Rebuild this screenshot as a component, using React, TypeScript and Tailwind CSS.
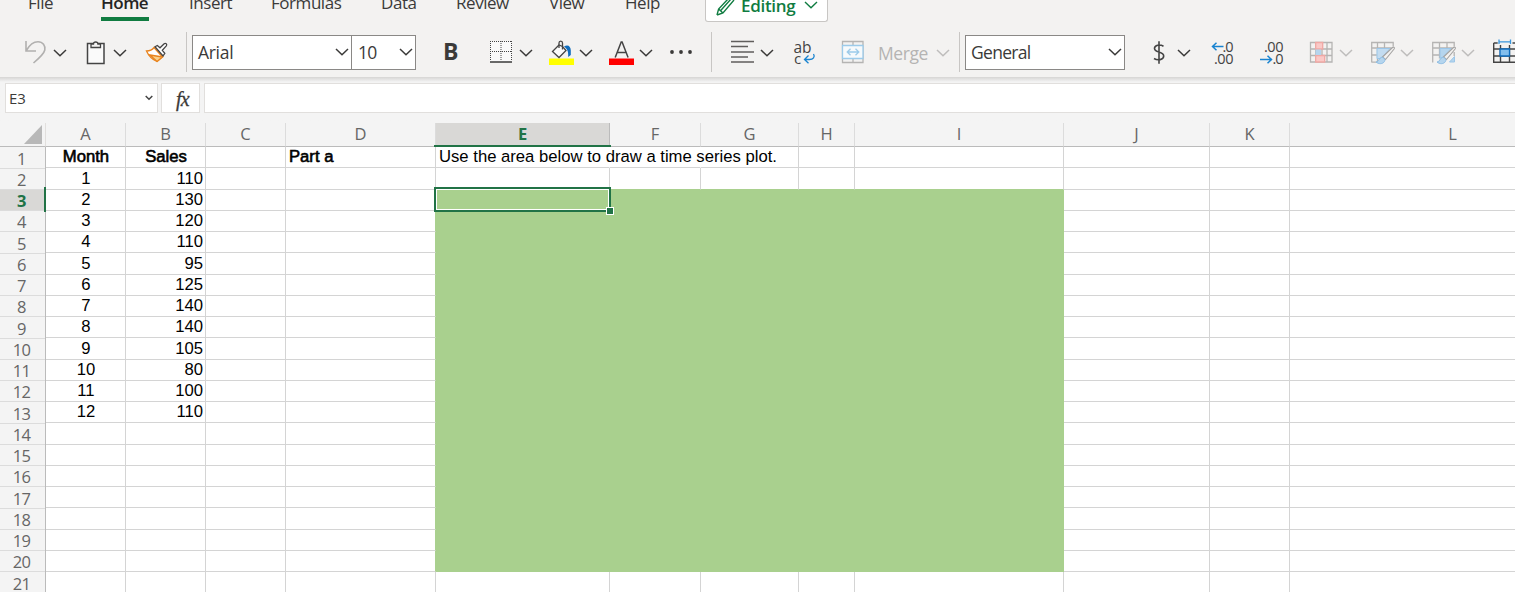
import React from 'react';
import clsx from 'clsx';

const COLUMNS = [
  { name: 'A', width: 'w-[80px]' },
  { name: 'B', width: 'w-[80px]' },
  { name: 'C', width: 'w-[80px]' },
  { name: 'D', width: 'w-[150px]' },
  { name: 'E', width: 'w-[174px]' },
  { name: 'F', width: 'w-[91px]' },
  { name: 'G', width: 'w-[98px]' },
  { name: 'H', width: 'w-[56px]' },
  { name: 'I', width: 'w-[209px]' },
  { name: 'J', width: 'w-[146px]' },
  { name: 'K', width: 'w-[80px]' },
  { name: 'L', width: 'w-[326px]' },
];

const SALES = [110, 130, 120, 110, 95, 125, 140, 140, 105, 80, 100, 110];
const ROWS = Array.from({ length: 21 }, (_, i) => i + 1);

const TABS = [
  { label: 'File', width: 'w-[73px]' },
  { label: 'Home', width: 'w-[88px]' },
  { label: 'Insert', width: 'w-[82px]' },
  { label: 'Formulas', width: 'w-[110px]' },
  { label: 'Data', width: 'w-[75px]' },
  { label: 'Review', width: 'w-[93px]' },
  { label: 'View', width: 'w-[76px]' },
  { label: 'Help', width: 'w-[80px]' },
];

interface IconProps {
  x: number;
  width: number;
  className?: string;
  children: React.ReactNode;
}

// Icons share one toolbar-wide coordinate space, each shows its own slice of it
function Icon({ x, width, className, children }: IconProps) {
  return (
    <svg
      width={width}
      height={28}
      viewBox={`${x} 38 ${width} 28`}
      fill="none"
      stroke="#444"
      strokeWidth="1.3"
      className={clsx('shrink-0', className)}
    >
      {children}
    </svg>
  );
}

function Chevron({ className, muted }: { className?: string; muted?: boolean }) {
  return (
    <svg
      width={14}
      height={8}
      viewBox="0 0 14 8"
      fill="none"
      stroke={muted ? '#bebdbc' : '#3b3a39'}
      strokeWidth="1.5"
      className={clsx('shrink-0', className)}
    >
      <path d="M1 1l6 5.8L13 1" />
    </svg>
  );
}

function Separator({ className }: { className: string }) {
  return <div className={clsx('h-10 w-px shrink-0 bg-[#c8c6c4]', className)} />;
}

function Ribbon() {
  return (
    <div className="h-[77px] bg-[#f3f2f1] text-[#3b3a39]">
      <div className="flex h-[27px] pl-7">
        {TABS.map((tab) => (
          <div key={tab.label} className={clsx('h-[21px] shrink-0', tab.width)}>
            <div
              className={clsx(
                'flex h-[21px] text-[17px] leading-[24px]',
                tab.label === 'Home'
                  ? 'w-[48px] border-b-4 border-[#107c41] font-semibold tracking-[-0.5px] text-[#252423]'
                  : 'w-fit tracking-[-0.45px]',
              )}
            >
              <div className="-mt-[9px] whitespace-nowrap">{tab.label}</div>
            </div>
          </div>
        ))}
        <div className="flex h-[22px] w-[123px] shrink-0 rounded-b-[3px] border border-t-0 border-[#c8c6c4] bg-white pl-[10px]">
          <svg width="20" height="18" viewBox="0 0 20 18" fill="none" stroke="#107c41" strokeWidth="1.4">
            <path d="M1 15l1.6-6L12-1M1 15l6-2L18 0M2.6 9l4.4 4M4.5 10.8L15-1" />
          </svg>
          <span className="-mt-[6px] ml-[5px] w-[63px] whitespace-nowrap text-[17px] font-semibold leading-[24px] tracking-[-0.3px] text-[#107c41]">
            Editing
          </span>
          <svg width="14" height="8" viewBox="0 0 14 8" fill="none" stroke="#107c41" strokeWidth="1.4" className="mt-[1px]">
            <path d="M1 1l6 5.8L13 1" />
          </svg>
        </div>
      </div>

      <div className="flex h-[50px] items-center overflow-hidden pl-6">
        <Icon x={24} width={26}>
          <path d="M26 41v10h10M26.3 50.5C30 44 34 41.700 38 41.700C43 41.700 45.500 46 44.800 50C44 54 40 57.500 33.500 63" stroke="#b1b0af" strokeWidth="1.6" />
        </Icon>
        <Chevron className="ml-[3px] mt-[2px]" />
        <Icon x={84} width={26} className="ml-[17px]">
          <rect x="87.500" y="43.500" width="16.500" height="20" fill="#fafafa" strokeWidth="1.5" />
          <path d="M91 47.500v-3.500h2.500c0-1.500 1-2 2.200-2s2.200.5 2.200 2h2.600v3.500z" fill="#f3f2f1" />
        </Icon>
        <Chevron className="ml-[3px] mt-[2px]" />
        <Icon x={145} width={26} className="ml-[18px]">
          <path d="M154 47.500L162.500 57L157 61.500C152 59.500 148.500 55.500 146.500 51C150 51 152.500 49.500 154 47.500z" fill="#fff" stroke="#e8831d" />
          <path d="M150 55L162.500 57L157 61.500z" fill="#fbd189" stroke="#e8831d" />
          <path d="M155 46.800l2.300-1.300 2.700 2.300 4.200-4c1.400-1.200 3.300.6 2.100 2.100L162.300 50.300l2.500 3-1.800 2.700z" fill="#fff" />
        </Icon>
        <Separator className="ml-[15px]" />

        <div className="ml-[5px] mt-px flex h-[35px] w-[224px] shrink-0 border border-[#8a8886] bg-white text-[17.5px] tracking-[-0.3px]">
          <div className="flex w-[159px] items-center justify-between border-r border-[#8a8886] pl-[5px] pr-[2px]">
            <span>Arial</span>
            <Chevron className="-mt-px" />
          </div>
          <div className="flex flex-1 items-center justify-between pl-[6px] pr-[2px]">
            <span className="tracking-[-0.8px]">10</span>
            <Chevron className="-mt-px" />
          </div>
        </div>

        <span className="-mt-[2px] ml-[27px] w-[17px] shrink-0 text-[23px] font-bold leading-none">B</span>
        <Icon x={489} width={25} className="ml-[29px]">
          <path d="M490 41h22v21h-22z" fill="#fafafa" stroke="none" />
          <path d="M490 41.500h22M490 51.500h22" strokeDasharray="1 1" strokeWidth="1" />
          <path d="M490.500 41v20M501 41v20M511.500 41v20" strokeDasharray="1 1" strokeWidth="1" />
          <path d="M490 62h22" strokeWidth="1.600" />
        </Icon>
        <Chevron className="ml-[5px] mt-[2px]" />
        <Icon x={548} width={28} className="ml-[15px]">
          <path d="M549 58.500h25v6.500h-25z" fill="#ff0" stroke="none" />
          <path d="M559 45L552.500 51.500L559 57.500L566 50.500L562.500 46.500z" fill="#fafafa" />
          <path d="M559 48v-5c0-2.500 3.500-2.500 3.500 0v6.500" />
          <path d="M564 46.500c4-2.500 6.800 0 6.800 4v4.500l-2.600 2c0-4 .3-7-4.200-10.500z" fill="#0f6cbd" stroke="none" />
        </Icon>
        <Chevron className="ml-[3px] mt-[2px]" />
        <Icon x={608} width={28} className="ml-[15px]">
          <path d="M609 58.500h25v6.500h-25z" fill="red" stroke="none" />
          <path d="M615.200 57.500l6-15.500h.9l6 15.500M617.300 52.500h8.600" strokeWidth="1.5" />
        </Icon>
        <Chevron className="ml-[3px] mt-[2px]" />
        <Icon x={669} width={24} className="ml-[16px]">
          <g fill="#3b3a39" stroke="none">
            <circle cx="672" cy="52" r="1.900" />
            <circle cx="681" cy="52" r="1.900" />
            <circle cx="690" cy="52" r="1.900" />
          </g>
        </Icon>
        <Separator className="ml-[18px]" />

        <Icon x={730} width={26} className="ml-[18px]">
          <path d="M731 41.500h23M731 46.500h17M731 52h23M731 57h17M731 62h23" stroke="#605e5c" />
        </Icon>
        <Chevron className="ml-[4px] mt-[2px]" />
        <Icon x={792} width={26} className="ml-[18px]">
          <text x="793.500" y="53" fontSize="15.500" fill="#444" stroke="none" textLength="18">ab</text>
          <text x="794" y="63.500" fontSize="15" fill="#444" stroke="none" textLength="6.500">c</text>
          <path d="M813.500 54c2 3-.5 5.500-4 5.500h-5M808.500 55.500l-4 4 4 3.800" stroke="#1883d0" />
        </Icon>
        <Icon x={841} width={24} className="ml-[23px]">
          <path d="M842.500 41.500h20.500v21h-20.500zM853 41.500v4M853 58.500v4" stroke="#b5b4b3" />
          <path d="M842.500 45.500h20.500v13h-20.500zM847.500 52h11M850.500 48.700l-3.300 3.300 3.300 3.300M855.500 48.700l3.300 3.300-3.300 3.300" stroke="#9ccbea" fill="#f6fafc" />
        </Icon>
        <span className="ml-[13px] mt-[3px] w-[58px] shrink-0 text-[17.5px] tracking-[-0.4px] text-[#b5b4b3]">Merge</span>
        <Chevron className="mt-[2px]" muted />
        <Separator className="ml-[9px]" />

        <div className="ml-[5px] mt-px flex h-[35px] w-[160px] shrink-0 items-center justify-between border border-[#8a8886] bg-white pl-[5px] pr-[2px] text-[17.5px] tracking-[-0.7px]">
          <span>General</span>
          <Chevron className="-mt-px" />
        </div>

        <Icon x={1151} width={16} className="ml-[26px]">
          <path d="M1163.500 46.200c-3.500-2-9-1.500-9 2.300c0 4.500 9.200 2.700 9.200 7.500c0 4-6 4.800-9.700 2.500M1159 41.200v22.600" strokeWidth="1.6" />
        </Icon>
        <Chevron className="ml-[10px] mt-[2px]" />
        <Icon x={1210} width={26} className="ml-[19px]">
          <path d="M1223.500 46.500h-11M1216.500 42.700l-4 3.800 4 3.800" stroke="#1883d0" strokeWidth="1.5" />
          <g fill="#444" stroke="none" fontSize="14.500">
            <text x="1222.500" y="51.500" textLength="11">.0</text>
            <text x="1214" y="64" textLength="19.500">.00</text>
          </g>
        </Icon>
        <Icon x={1258} width={28} className="ml-[22px]">
          <path d="M1260 59.500h11.500M1267.500 55.700l4 3.800-4 3.800" stroke="#1883d0" strokeWidth="1.5" />
          <g fill="#444" stroke="none" fontSize="14.500">
            <text x="1264" y="51.500" textLength="19.500">.00</text>
            <text x="1272.500" y="64" textLength="11">.0</text>
          </g>
        </Icon>
        <Icon x={1309} width={26} className="ml-[23px]">
          <path d="M1310.500 42.500h21.500v19.500h-21.500zM1310.500 49h21.500M1310.500 55.500h21.500M1315.700 42.500v19.500M1322 42.500v19.500M1327 42.500v19.500" stroke="#b5b4b3" />
          <path d="M1315.700 42.500h7v6.500h-7zM1315.700 55.500h9v6.500h-9z" fill="#fac9c7" stroke="#f0a9a5" />
          <path d="M1315.500 49.500h5.500v5.500h-5.500z" fill="#b5d5ee" stroke="none" />
        </Icon>
        <Chevron className="ml-[4px] mt-[2px]" muted />
        <Icon x={1370} width={27} className="ml-[17px]">
          <path d="M1371.700 62.500v-20h21.500v4M1371.700 48h20M1371.700 55h5M1371.700 62.200h5M1377.500 42.500v20M1384.500 42.500v6" stroke="#b5b4b3" />
          <path d="M1377 48.500h13l-9 10h-4z" fill="#c3dcf0" stroke="#9cc6e8" strokeWidth="1" />
          <path d="M1382.500 57L1392.500 47.500c1.300-1 2.500.3 1.600 1.500L1385.500 59.500z" fill="#f3f2f1" stroke="#a5a4a3" strokeWidth="1.100" />
          <path d="M1376 62c3 0 2.500-3.900 5.500-4.600c2.700 0 4 2 3 4c-1.800 3-6 2.800-8.500.6z" fill="#b5d5ee" stroke="#8dbde3" strokeWidth="1" />
        </Icon>
        <Chevron className="ml-[3px] mt-[2px]" muted />
        <Icon x={1430} width={28} className="ml-[16px]">
          <path d="M1432.700 62.500v-20h21.500v4M1432.700 48h20M1432.700 55h7M1439.500 42.500v16M1447 42.500v6M1454.200 52v4" stroke="#b5b4b3" />
          <path d="M1440 48.500h11l-9 9.500h-2zM1449.500 62l5-5.500v5.500z" fill="#b5d5ee" stroke="#9cc6e8" strokeWidth="1" />
          <path d="M1443.500 57L1453.500 47.500c1.300-1 2.500.3 1.600 1.500L1446.500 59.500z" fill="#f3f2f1" stroke="#a5a4a3" strokeWidth="1.100" />
          <path d="M1437 62c3 0 2.500-3.900 5.500-4.600c2.700 0 4 2 3 4c-1.800 3-6 2.800-8.500.6z" fill="#b5d5ee" stroke="#8dbde3" strokeWidth="1" />
        </Icon>
        <Chevron className="ml-[3px] mt-[2px]" muted />
        <Icon x={1492} width={23} className="ml-[17px]">
          <path d="M1493.700 43v19.300h24M1493.700 43h4M1512.500 43h4M1493.700 49h24M1493.700 56h24M1500.500 45v17M1509.500 45v17" strokeWidth="1.4" />
          <path d="M1500 49h9.500v7h-9.500z" fill="#83beec" stroke="#0f6cbd" />
          <path d="M1499 41.800h11.500M1499 39.500v4.500M1510.500 39.500v4.500" stroke="#3a96dd" />
        </Icon>
      </div>
    </div>
  );
}

function FormulaBar() {
  return (
    <div className="flex h-[46px] bg-[#f4f4f4] bg-linear-to-b from-[#d6d5d4] to-[#f4f4f4] to-[5px] pl-[5px] pt-[6px] text-[#3b3a39]">
      <div className="flex h-[30px] w-[153px] shrink-0 items-center justify-between border border-[#e1dfdd] bg-white pl-[3px] pr-[4px] text-[15px]">
        <span className="mt-px">E3</span>
        <svg width="8" height="6" viewBox="0 0 8 6" fill="none" stroke="#444" strokeWidth="1.5">
          <path d="M.7 1L4 4.300 7.300 1" />
        </svg>
      </div>
      <div className="ml-[3px] flex h-[30px] w-[39px] shrink-0 items-center justify-center border border-[#e1dfdd] bg-white pl-1 pt-px font-['Liberation_Serif',serif] text-[20px] italic tracking-[-0.8px] [-webkit-text-stroke:0.3px_#3b3a39]">
        fx
      </div>
      <div className="ml-[4px] h-[30px] flex-1 border border-r-0 border-[#e1dfdd] bg-white" />
    </div>
  );
}

function cellText(row: number, column: string) {
  if (row === 1) {
    if (column === 'A') return 'Month';
    if (column === 'B') return 'Sales';
    if (column === 'D') return 'Part a';
    if (column === 'E') return 'Use the area below to draw a time series plot.';
    return '';
  }
  if (row <= 13 && column === 'A') return String(row - 1);
  if (row <= 13 && column === 'B') return String(SALES[row - 2]);
  return '';
}

function Cell({ row, column, width }: { row: number; column: string; width: string }) {
  const inPlotRows = row >= 3 && row <= 20;
  const plotColumn = 'EFGHI'.includes(column);
  const inPlot = inPlotRows && plotColumn;
  const text = cellText(row, column);

  return (
    <div
      className={clsx(
        'relative flex h-full shrink-0 items-end whitespace-nowrap border-b border-r pb-px',
        width,
        inPlot ? 'bg-[#a9d08e]' : 'bg-white',
        inPlot || (row === 2 && plotColumn) ? 'border-b-[#a9d08e]' : 'border-b-[#d4d4d4]',
        inPlot || (inPlotRows && column === 'D')
          ? 'border-r-[#a9d08e]'
          : row === 1 && (column === 'E' || column === 'F')
            ? 'border-r-transparent'
            : 'border-r-[#d4d4d4]',
        column === 'A' || (row === 1 && column === 'B')
          ? 'justify-center pl-[1px]'
          : column === 'B'
            ? 'justify-end pr-[2px]'
            : 'pl-[3px]',
        row === 1 && column === 'E' && 'z-10',
        row === 3 && column === 'E' && 'z-20',
      )}
    >
      {text && (
        <span className={clsx('leading-[19px]', row === 1 && column !== 'E' && '[-webkit-text-stroke:0.6px_black]')}>
          {text}
        </span>
      )}
      {row === 3 && column === 'E' && (
        <div className="absolute -left-[2px] -top-[3px] h-[25px] w-[177px] border-2 border-[#217346]">
          <div className="h-full w-full border border-white" />
          <div className="absolute -bottom-[5px] -right-[5px] h-2 w-2 border border-white bg-[#217346]" />
        </div>
      )}
    </div>
  );
}

function Sheet() {
  return (
    <div className="h-[469px] overflow-hidden bg-[#f4f4f4]">
      <div className="flex h-6 text-[16.5px] text-[#666]">
        <div className="flex w-[46px] shrink-0 items-start justify-end border-b border-r border-b-[#bbb] border-r-[#e1dfdd] pr-[3px] pt-[2px]">
          <svg width="18" height="19" viewBox="0 0 18 19" fill="#b8b8b8">
            <path d="M18 0v19H0z" />
          </svg>
        </div>
        {COLUMNS.map(({ name, width }) => (
          <div
            key={name}
            className={clsx(
              'relative flex shrink-0 items-center justify-center border-b border-r leading-none',
              width,
              name === 'E' ? 'border-[#bbb] bg-[#d9d8d6] font-bold text-[#217346]' : 'border-b-[#bbb] border-r-[#dcdcdc]',
            )}
          >
            {name}
            {name === 'E' && <div className="absolute -bottom-px -left-[2px] z-10 h-[2px] w-[177px] bg-[#217346]" />}
          </div>
        ))}
      </div>

      <div className="flex">
        <div className="w-[46px] shrink-0 border-r border-[#bbb] text-[16.5px] text-[#666]">
          {ROWS.map((row) => (
            <div
              key={row}
              className={clsx(
                'relative flex items-end justify-center border-b border-[#dcdcdc] pr-[2px] tracking-[-0.6px]',
                row % 4 === 1 ? 'h-[22px]' : 'h-[21px]',
                row === 3 && 'bg-[#d9d8d6] font-bold text-[#217346]',
              )}
            >
              <span className={row % 4 === 3 ? 'leading-[18px]' : 'leading-[19px]'}>{row}</span>
              {row === 3 && <div className="absolute -right-px -top-[3px] z-10 h-[25px] w-[2px] bg-[#217346]" />}
            </div>
          ))}
        </div>
        <div className="font-['Liberation_Sans',Arial,sans-serif] text-[16.67px] text-black">
          {ROWS.map((row) => (
            <div key={row} className={clsx('flex', row % 4 === 2 ? 'h-[22px]' : 'h-[21px]')}>
              {COLUMNS.map(({ name, width }) => (
                <Cell key={name} row={row} column={name} width={width} />
              ))}
            </div>
          ))}
        </div>
      </div>
    </div>
  );
}

export default function App() {
  return (
    <div className="h-[592px] w-[1515px] overflow-hidden font-['Open_Sans','Noto_Sans',sans-serif]">
      <Ribbon />
      <FormulaBar />
      <Sheet />
    </div>
  );
}
